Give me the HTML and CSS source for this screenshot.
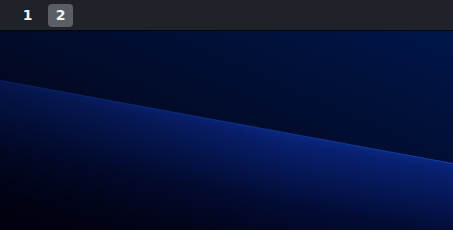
FILE: index.html
```html
<!DOCTYPE html>
<html lang="en">
<head>
    <meta charset="UTF-8">
    <meta name="viewport" content="width=device-width, initial-scale=1.0">
    <title>Workspaces</title>
    <link rel="stylesheet" href="styles.css">
</head>
<body>
    <div class="bar">
        <button class="ws">1</button>
        <button class="ws active">2</button>
    </div>

    <div class="wallpaper">
        <svg viewBox="0 0 453 199" width="453" height="199">
            <defs>
                <linearGradient id="sky" x1="0" y1="1" x2="1" y2="0">
                    <stop offset="0" stop-color="#01020c"/>
                    <stop offset="0.45" stop-color="#020a26"/>
                    <stop offset="1" stop-color="#00164a"/>
                </linearGradient>
                <!-- fades away from the edge, perpendicular to it -->
                <linearGradient id="wave" gradientUnits="userSpaceOnUse" x1="226" y1="90.5" x2="200.8" y2="228">
                    <stop offset="0" stop-color="#0a2782"/>
                    <stop offset="0.07" stop-color="#08206f"/>
                    <stop offset="0.29" stop-color="#051652"/>
                    <stop offset="0.5" stop-color="#030c36"/>
                    <stop offset="0.79" stop-color="#02051e"/>
                    <stop offset="1" stop-color="#010314"/>
                </linearGradient>
                <linearGradient id="shade" x1="0" y1="0" x2="1" y2="0">
                    <stop offset="0" stop-color="#000006" stop-opacity="0.4"/>
                    <stop offset="0.65" stop-color="#000006" stop-opacity="0"/>
                </linearGradient>
                <linearGradient id="edge" x1="0" y1="0" x2="1" y2="0">
                    <stop offset="0" stop-color="#0e2f90" stop-opacity="0.25"/>
                    <stop offset="1" stop-color="#1e4cb4" stop-opacity="0.6"/>
                </linearGradient>
            </defs>
            <rect width="453" height="199" fill="url(#sky)"/>
            <polygon points="0,49 453,132 453,199 0,199" fill="url(#wave)"/>
            <polygon points="0,49 453,132 453,199 0,199" fill="url(#shade)"/>
            <line x1="0" y1="49.6" x2="453" y2="132.6" stroke="url(#edge)" stroke-width="1"/>
        </svg>
    </div>
</body>
</html>
```

FILE: styles.css
```css
body {
    margin: 0;
    background-color: #01030f;
    font-family: "DejaVu Sans", sans-serif;
    overflow: hidden;
}
.bar {
    display: flex;
    align-items: center;
    height: 30px;
    padding-left: 15px;
    background-color: #1f2229;
    border-bottom: 1px solid #050608;
}
.ws {
    width: 25px;
    height: 23px;
    margin-right: 8px;
    padding: 0;
    border: none;
    border-radius: 4px;
    background: transparent;
    color: #f2f2f2;
    font-family: "DejaVu Sans", sans-serif;
    font-size: 14px;
    font-weight: bold;
    cursor: pointer;
}
.ws.active {
    background-color: #5b5f65;
}
.wallpaper {
    height: 199px;
    overflow: hidden;
}
.wallpaper svg {
    display: block;
}
```
